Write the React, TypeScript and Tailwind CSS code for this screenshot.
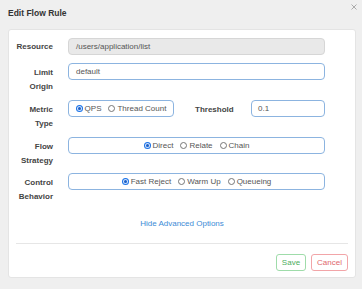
import React from "react";

type Opt = { label: string; checked?: boolean };

function Radio({ label, checked }: Opt) {
  return (
    <span className="flex items-center gap-[2px]">
      {checked ? (
        <span className="flex h-[7px] w-[7px] items-center justify-center rounded-full bg-[#1a73e8]">
          <span className="h-[3px] w-[3px] rounded-full bg-[#1a5fc8] ring-1 ring-[#cfe0fa]" />
        </span>
      ) : (
        <span className="h-[7px] w-[7px] rounded-full border border-[#767676] bg-white" />
      )}
      <span>{label}</span>
    </span>
  );
}

function RadioBox({ options, className }: { options: Opt[]; className: string }) {
  return (
    <div
      className={`flex h-[17px] items-center justify-center gap-[7px] rounded-[4px] border border-[#8cb4e0] text-[8px] text-[#555] ${className}`}
    >
      {options.map((o) => (
        <Radio key={o.label} {...o} />
      ))}
    </div>
  );
}

function Label({ lines }: { lines: string[] }) {
  return (
    <div className="w-[37px] shrink-0 pt-[3px] text-right text-[8px] font-bold leading-[14px] text-[#444]">
      {lines.map((l) => (
        <div key={l}>{l}</div>
      ))}
    </div>
  );
}

export default function App() {
  return (
    <div className="relative h-[289px] w-[362px] overflow-hidden bg-[#efefef] font-['Liberation_Sans',Arial,sans-serif]">
      <svg className="absolute right-[5px] top-[4px]" width="6" height="6" viewBox="0 0 6 6">
        <path d="M0.5 0.5L5.5 5.5M5.5 0.5L0.5 5.5" stroke="#aaa" strokeWidth="1" />
      </svg>

      <div className="pl-[8px] pt-[7px] text-[8.5px] font-bold leading-[12px] text-[#333]">
        Edit Flow Rule
      </div>

      <div className="ml-[8px] mt-[10px] h-[249px] w-[348px] rounded-[3px] border border-[#e4e4e4] bg-white px-[7px] pt-[8px]">
        {/* Resource */}
        <div className="mb-[8px] flex h-[17px] items-start gap-[15px]">
          <div className="w-[37px] shrink-0 text-right text-[8px] font-bold leading-[17px] text-[#444]">
            Resource
          </div>
          <div className="flex h-[17px] w-[257px] items-center rounded-[4px] border border-[#d6d6d6] bg-[#e9e9e9] pl-[7px] text-[8px] text-[#555]">
            /users/application/list
          </div>
        </div>

        {/* Limit Origin */}
        <div className="mb-[6px] flex h-[31px] items-start gap-[15px]">
          <Label lines={["Limit", "Origin"]} />
          <div className="flex h-[17px] w-[257px] items-center rounded-[4px] border border-[#8cb4e0] bg-white pl-[7px] text-[8px] text-[#555]">
            default
          </div>
        </div>

        {/* Metric Type */}
        <div className="mb-[6px] flex h-[31px] items-start">
          <Label lines={["Metric", "Type"]} />
          <RadioBox
            className="ml-[15px] w-[106px]"
            options={[{ label: "QPS", checked: true }, { label: "Thread Count" }]}
          />
          <div className="ml-[21px] w-[39px] pt-[3px] text-[8px] font-bold leading-[14px] text-[#444]">
            Threshold
          </div>
          <div className="ml-[17px] flex h-[17px] w-[74px] items-center rounded-[4px] border border-[#8cb4e0] bg-white pl-[6px] text-[8px] text-[#555]">
            0.1
          </div>
        </div>

        {/* Flow Strategy */}
        <div className="mb-[5px] flex h-[31px] items-start gap-[15px]">
          <Label lines={["Flow", "Strategy"]} />
          <RadioBox
            className="w-[257px]"
            options={[{ label: "Direct", checked: true }, { label: "Relate" }, { label: "Chain" }]}
          />
        </div>

        {/* Control Behavior */}
        <div className="flex h-[31px] items-start gap-[15px]">
          <Label lines={["Control", "Behavior"]} />
          <RadioBox
            className="w-[257px]"
            options={[{ label: "Fast Reject", checked: true }, { label: "Warm Up" }, { label: "Queueing" }]}
          />
        </div>

        <div className="mt-[13px] text-center text-[8px] leading-[14px] text-[#3d8bd6]">
          Hide Advanced Options
        </div>

        <div className="mt-[12px] h-px bg-[#e6e6e6]" />

        <div className="mt-[10px] flex justify-end gap-[5px]">
          <button className="flex h-[17px] items-center rounded-[3px] border border-[#9fdcaa] bg-white px-[5px] text-[8px] text-[#4cae5c]">
            Save
          </button>
          <button className="flex h-[17px] items-center rounded-[3px] border border-[#f2a5a8] bg-white px-[5px] text-[8px] text-[#e0676c]">
            Cancel
          </button>
        </div>
      </div>
    </div>
  );
}
